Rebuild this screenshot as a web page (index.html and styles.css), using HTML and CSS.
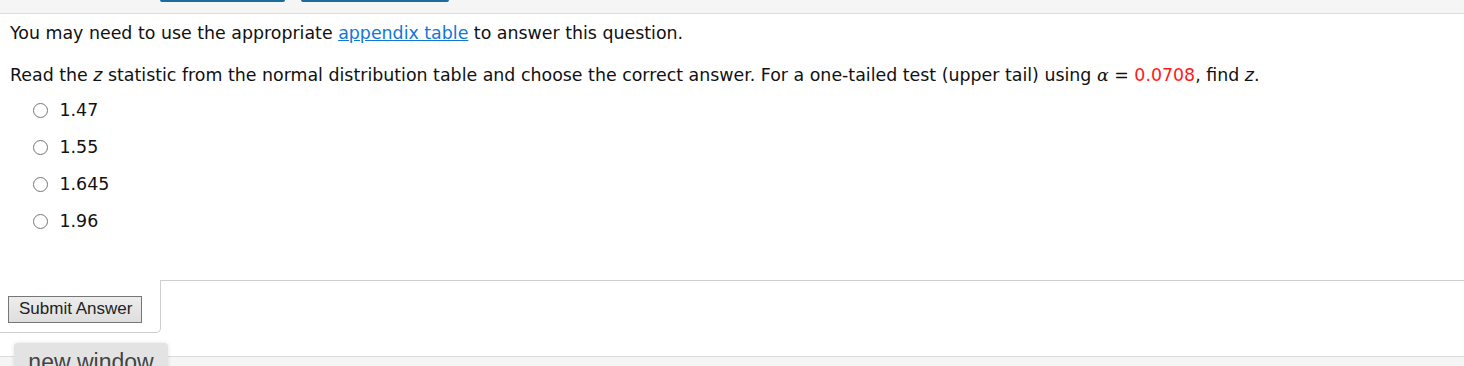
FILE: index.html
```html
<!DOCTYPE html>
<html lang="en">
<head>
    <meta charset="UTF-8">
    <title>Question</title>
    <link rel="stylesheet" href="styles.css">
</head>
<body>
    <div class="topbar">
        <span class="stub stub-one"></span>
        <span class="stub stub-two"></span>
    </div>

    <div class="question">
        <p class="note">You may need to use the appropriate <a href="#">appendix table</a> to answer this question.</p>
        <p class="prompt">Read the <i>z</i> statistic from the normal distribution table and choose the correct answer. For a one-tailed test (upper tail) using <i class="alpha">&alpha;</i> = <span class="value">0.0708</span>, find <i>z</i>.</p>
        <ul class="choices">
            <li><label><input type="radio" name="z"> 1.47</label></li>
            <li><label><input type="radio" name="z"> 1.55</label></li>
            <li><label><input type="radio" name="z"> 1.645</label></li>
            <li><label><input type="radio" name="z"> 1.96</label></li>
        </ul>
    </div>

    <div class="submit-row">
        <div class="submit-cell">
            <button class="submit">Submit Answer</button>
        </div>
        <div class="rest-cell"></div>
    </div>

    <div class="footer">
        <div class="tab">new window</div>
    </div>
</body>
</html>
```

FILE: styles.css
```css
body {
    margin: 0;
    font-family: "DejaVu Sans", Verdana, sans-serif;
    font-size: 17.4px;
    color: #111;
    background: #fff;
    overflow: hidden;
}
.topbar {
    height: 13px;
    background-color: #f5f5f5;
    border-bottom: 1px solid #dcdcdc;
    display: flex;
    align-items: flex-start;
}
.stub {
    height: 2px;
    background-color: #1d6a9c;
    border-radius: 0 0 2px 2px;
}
.stub-one {
    margin-left: 160px;
    width: 125px;
}
.stub-two {
    margin-left: 16px;
    width: 148px;
}
.question {
    padding: 0 10px;
}
.note {
    margin: 9px 0 0;
    line-height: 21px;
}
.note a {
    color: #1178d6;
}
.prompt {
    margin: 21px 0 0;
    line-height: 21px;
}
.alpha {
    font-family: "DejaVu Serif", serif;
}
.value {
    color: #ff1a1a;
}
.choices {
    list-style: none;
    margin: 14px 0 0;
    padding: 0 0 0 23px;
}
.choices li {
    height: 37px;
    line-height: 21px;
}
.choices input {
    width: 15px;
    height: 15px;
    margin: 0 6px 0 0;
    vertical-align: -2px;
}
.submit-row {
    display: flex;
    margin-top: 32px;
    height: 53px;
}
.submit-cell {
    width: 161px;
    border-right: 1px solid #cfcfcf;
    border-bottom: 1px solid #cfcfcf;
    border-bottom-right-radius: 5px;
    display: flex;
    align-items: center;
    padding-left: 8px;
    box-sizing: border-box;
    padding-top: 6px;
}
.rest-cell {
    flex: 1;
    border-top: 1px solid #cfcfcf;
}
.submit {
    font-family: "Liberation Sans", Arial, sans-serif;
    font-size: 17px;
    color: #222;
    padding: 0 9px 0 10px;
    height: 27px;
    background: linear-gradient(#ededed, #dedede);
    border: 1px solid #767676;
    border-radius: 0;
}
.footer {
    position: relative;
    margin-top: 23px;
    height: 40px;
    background-color: #f5f5f5;
    border-top: 1px solid #dcdcdc;
}
.tab {
    position: absolute;
    left: 14px;
    top: -14px;
    width: 154px;
    height: 40px;
    background-color: #e3e3e3;
    border-radius: 4px 4px 0 0;
    box-shadow: 0 0 4px rgba(0, 0, 0, 0.12);
    font-family: "Liberation Sans", Arial, sans-serif;
    font-size: 23px;
    color: #444;
    text-align: center;
    padding-top: 6px;
    box-sizing: border-box;
}
```
